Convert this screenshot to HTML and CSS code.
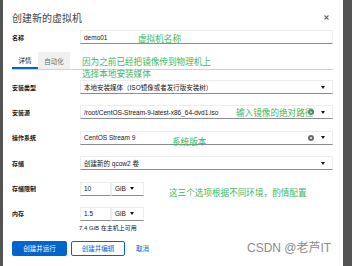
FILE: index.html
```html
<!DOCTYPE html>
<html lang="zh-CN">
<head>
    <meta charset="UTF-8">
    <meta name="viewport" content="width=device-width, initial-scale=1.0">
    <title>创建新的虚拟机</title>
    <link rel="stylesheet" href="styles.css">
</head>
<body>
    <div class="modal">
        <div class="modal-header">
            <h1>创建新的虚拟机</h1>
            <svg class="close" width="5" height="5" viewBox="0 0 10 10"><path d="M1 1L9 9M9 1L1 9" stroke="#6a6e73" stroke-width="2.2"/></svg>
        </div>

        <div class="form-row name-row">
            <label>名称</label>
            <div class="field">demo01</div>
            <span class="note note-name">虚拟机名称</span>
        </div>

        <div class="tabs">
            <span class="tab active">详情</span>
            <span class="tab">自动化</span>
            <span class="note note-tabs">因为之前已经把镜像传到物理机上<br>选择本地安装媒体</span>
        </div>

        <div class="form">
            <div class="form-row">
                <label>安装类型</label>
                <div class="field select"><span>本地安装媒体（ISO镜像或者发行版安装树）</span><i class="caret"></i></div>
            </div>
            <div class="form-row">
                <label>安装源</label>
                <div class="field select"><span>/root/CentOS-Stream-9-latest-x86_64-dvd1.iso</span><i class="clear"></i><i class="caret"></i></div>
                <span class="note note-src">输入镜像的绝对路径</span>
            </div>
            <div class="form-row">
                <label>操作系统</label>
                <div class="field select"><span>CentOS Stream 9</span><i class="clear"></i><i class="caret"></i></div>
                <span class="note note-os">系统版本</span>
            </div>
            <div class="form-row">
                <label>存储</label>
                <div class="field select"><span>创建新的 qcow2 卷</span><i class="caret"></i></div>
            </div>
            <div class="form-row">
                <label>存储限制</label>
                <div class="size-group">
                    <div class="field num">10</div>
                    <div class="field unit select"><span>GiB</span><i class="caret"></i></div>
                </div>
                <span class="note note-size">这三个选项根据不同环境，酌情配置</span>
            </div>
            <div class="form-row">
                <label>内存</label>
                <div class="size-group">
                    <div class="field num">1.5</div>
                    <div class="field unit select"><span>GiB</span><i class="caret"></i></div>
                </div>
            </div>
        </div>
        <div class="helper">7.4 GiB 在主机上可用</div>

        <div class="actions">
            <button class="btn btn-primary">创建并运行</button>
            <button class="btn btn-secondary">创建并编辑</button>
            <button class="btn btn-link">取消</button>
        </div>

        <div class="watermark">CSDN @老芦IT</div>
    </div>
</body>
</html>
```

FILE: styles.css
```css
body {
    margin: 0;
    background-color: #545454;
    font-family: 'Liberation Sans', 'Noto Sans CJK SC', sans-serif;
    overflow: hidden;
}
.modal {
    position: relative;
    width: 340px;
    height: 266px;
    margin-left: 3px;
    padding: 9px 10px 0 9px;
    box-sizing: border-box;
    background-color: #fff;
}
.modal-header {
    display: flex;
    justify-content: space-between;
    align-items: center;
    height: 16px;
}
h1 {
    margin: 0;
    font-size: 10px;
    font-weight: normal;
    color: #444;
}
.close {
    margin-right: 4px;
}
.form-row {
    position: relative;
    display: grid;
    grid-template-columns: 68px 1fr;
    align-items: center;
}
.name-row {
    margin-top: 5px;
}
label {
    font-size: 6px;
    font-weight: bold;
    color: #151515;
}
.field {
    display: flex;
    align-items: center;
    height: 14px;
    padding: 0 3px;
    box-sizing: border-box;
    border: 1px solid #ededed;
    border-bottom-color: #8a8d90;
    font-size: 6.5px;
    color: #151515;
}
.field span {
    flex: 1;
    white-space: nowrap;
}
.caret {
    width: 0;
    height: 0;
    margin-right: 4px;
    border-left: 2px solid transparent;
    border-right: 2px solid transparent;
    border-top: 3px solid #151515;
}
.clear {
    position: relative;
    width: 6px;
    height: 6px;
    margin-right: 7px;
    border-radius: 50%;
    background-color: #6a6e73;
}
.clear::after {
    content: '';
    position: absolute;
    left: 2px;
    top: 2px;
    width: 2px;
    height: 2px;
    background-color: #d2d2d2;
}
.tabs {
    position: relative;
    display: flex;
    height: 18px;
    margin-top: 8px;
    box-sizing: border-box;
    border-bottom: 1px solid #d2d2d2;
}
.tab {
    display: flex;
    align-items: center;
    justify-content: center;
    font-size: 6.5px;
    color: #6a6e73;
}
.tab.active {
    width: 26px;
    color: #151515;
    border-bottom: 2px solid #06c;
}
.tab + .tab {
    width: 32px;
    background-color: #f0f0f0;
}
.form {
    display: flex;
    flex-direction: column;
    gap: 11.4px;
    margin-top: 10px;
}
.size-group {
    display: flex;
}
.num {
    width: 31px;
}
.unit {
    width: 33px;
}
.unit .caret {
    margin-right: 6px;
}
.helper {
    margin: 2px 0 0 67px;
    font-size: 6px;
    line-height: 10px;
    color: #151515;
}
.actions {
    display: flex;
    align-items: center;
    margin-top: 8px;
}
.btn {
    height: 15px;
    padding: 0;
    border: 1px solid transparent;
    border-radius: 2px;
    background: none;
    font-family: inherit;
    font-size: 6.5px;
}
.btn-primary {
    width: 55px;
    background-color: #06c;
    color: #fff;
}
.btn-secondary {
    width: 54px;
    margin-left: 4px;
    border-color: #06c;
    color: #06c;
}
.btn-link {
    margin-left: 10px;
    color: #06c;
}
.note {
    position: absolute;
    font-size: 8.6px;
    line-height: 12px;
    color: #40b860;
    white-space: nowrap;
}
.note-name { left: 126px; top: 3px; }
.note-tabs { left: 70px; top: 4px; }
.note-src { left: 224px; top: 2px; }
.note-os { left: 160px; top: 5px; }
.note-size { left: 157px; top: 5px; }
.watermark {
    position: absolute;
    left: 244px;
    top: 241px;
    font-size: 12px;
    line-height: 14px;
    color: #8c8c8c;
}
```
